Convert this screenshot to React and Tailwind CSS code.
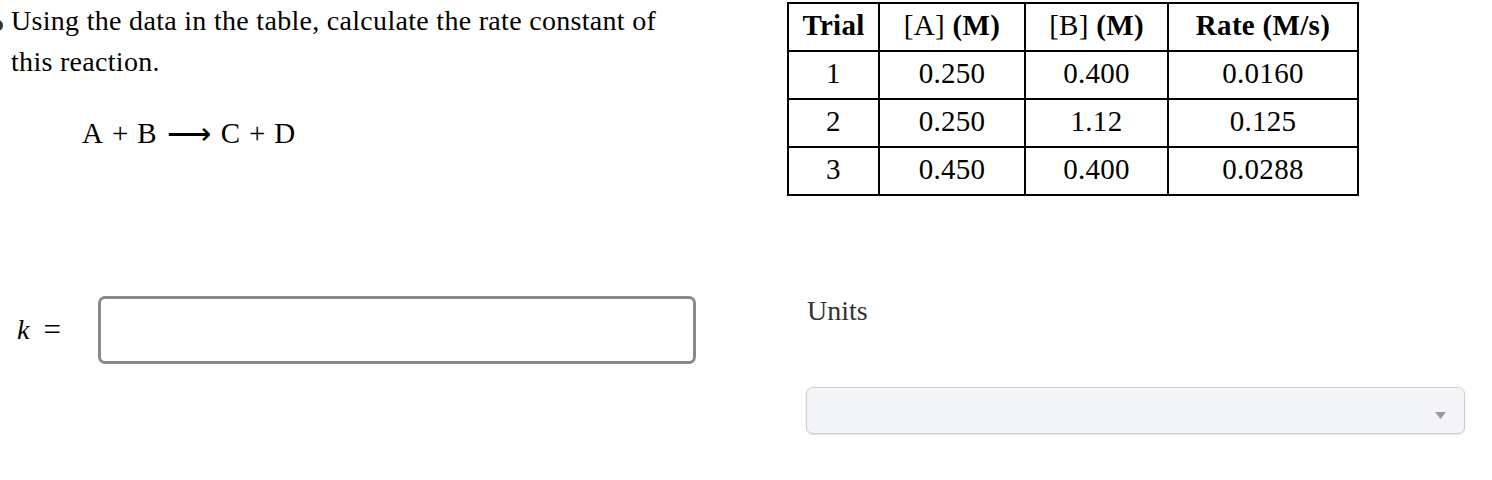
const ROWS = [
  ['1', '0.250', '0.400', '0.0160'],
  ['2', '0.250', '1.12', '0.125'],
  ['3', '0.450', '0.400', '0.0288'],
];

const COLS = ['w-[91px]', 'w-[146px]', 'w-[143px]', 'w-[190px]'];

export default function App() {
  return (
    <div className="relative w-[1492px] h-[480px] bg-white text-black font-['Liberation_Serif','Times_New_Roman',serif] overflow-hidden">
      {/* question number bubble, cut off at the edge */}
      <span className="absolute left-[-8px] top-[20px] w-[11px] h-[11px] rounded-full bg-[#333]" />

      <div className="grid grid-cols-[787px_1fr]">
        {/* question text */}
        <div className="pl-[11px]">
          <p className="text-[28px] leading-[41px] tracking-[0.3px] whitespace-nowrap">
            Using the data in the table, calculate the rate constant of
            <br />
            this reaction.
          </p>
          <p className="text-[29px] leading-[30px] pl-[71px] mt-[36px] flex items-center whitespace-nowrap">
            <span>A</span>
            <span className="mx-[9px]">+</span>
            <span>B</span>
            <span className="mx-[10px] text-[31px] translate-y-[1px]">⟶</span>
            <span>C</span>
            <span className="mx-[9px]">+</span>
            <span>D</span>
          </p>
        </div>

        {/* data table */}
        <div className="pt-[2px]">
          <table className="border-collapse border-2 border-black text-[29px] leading-none tracking-[0.3px]">
            <thead>
              <tr className="h-[48px]">
                <th className={`${COLS[0]} border-2 border-black font-bold pb-[4px]`}>Trial</th>
                <th className={`${COLS[1]} border-2 border-black pb-[4px]`}>
                  <span className="font-normal">[A]</span> <span className="font-bold">(M)</span>
                </th>
                <th className={`${COLS[2]} border-2 border-black pb-[4px]`}>
                  <span className="font-normal">[B]</span> <span className="font-bold">(M)</span>
                </th>
                <th className={`${COLS[3]} border-2 border-black font-bold pb-[4px]`}>Rate (M/s)</th>
              </tr>
            </thead>
            <tbody>
              {ROWS.map((r) => (
                <tr key={r[0]} className="h-[48px]">
                  {r.map((c, i) => (
                    <td key={i} className={`${COLS[i]} border-2 border-black text-center pb-[4px]`}>
                      {c}
                    </td>
                  ))}
                </tr>
              ))}
            </tbody>
          </table>
        </div>
      </div>

      <div className="grid grid-cols-[806px_1fr] mt-[100px]">
        {/* answer input */}
        <div className="flex items-center pl-[17px] h-[68px]">
          <span className="text-[28px] w-[81px] flex items-center">
            <i>k</i>
            <span className="ml-[14px] text-[31px]">=</span>
          </span>
          <div className="w-[598px] h-[68px] border-[3px] border-[#8a8a8a] rounded-[7px]" />
        </div>

        {/* units select */}
        <div>
          <p className="text-[28px] text-[#333] leading-[30px] pl-[1px]">Units</p>
          <div className="mt-[61px] w-[659px] h-[47px] bg-[#f3f4f8] border border-[#cfcfd3] rounded-[7px] shadow-[0_1px_2px_rgba(0,0,0,0.12)] flex items-center justify-end pr-[18px]">
            <svg width="11" height="7" viewBox="0 0 11 7" className="mt-[10px]">
              <path d="M0 0h11L5.5 7z" fill="#9a9a9a" />
            </svg>
          </div>
        </div>
      </div>
    </div>
  );
}
